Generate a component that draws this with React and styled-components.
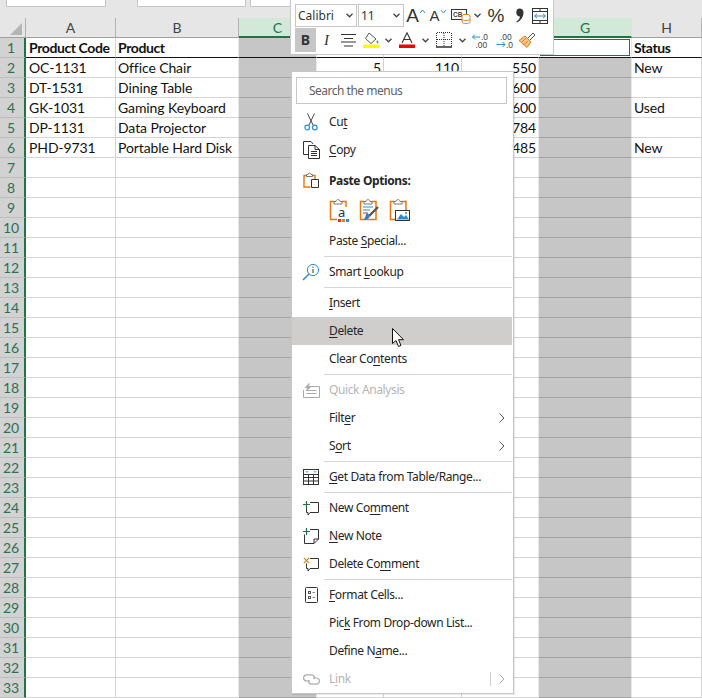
import React from 'react';
import styled, { createGlobalStyle } from 'styled-components';

const Global = createGlobalStyle`
  html, body { margin: 0; padding: 0; background: #fff; }
  body { width: 702px; height: 698px; overflow: hidden; }
`;

const COLS = [
  { k: 'A', w: 90, pad: 3 }, { k: 'B', w: 123, soft: true }, { k: 'C', w: 78, sel: true }, { k: 'D', w: 67 },
  { k: 'E', w: 78 }, { k: 'F', w: 77, soft: true }, { k: 'G', w: 93, sel: true }, { k: 'H', w: 70 },
];

const DATA = {
  1: { A: 'Product Code', B: 'Product', H: 'Status' },
  2: { A: 'OC-1131', B: 'Office Chair', D: '5', E: '110', F: '550', H: 'New' },
  3: { A: 'DT-1531', B: 'Dining Table', F: '600' },
  4: { A: 'GK-1031', B: 'Gaming Keyboard', F: '600', H: 'Used' },
  5: { A: 'DP-1131', B: 'Data Projector', F: '784' },
  6: { A: 'PHD-9731', B: 'Portable Hard Disk', F: '485', H: 'New' },
};
const NUMERIC = ['D', 'E', 'F'];

const Page = styled.div`
  position: relative;
  width: 702px;
  height: 698px;
  overflow: hidden;
  background: #fff;
  font-family: "Lato", "Liberation Sans", sans-serif;
`;
const TopBar = styled.div`
  height: 18px;
  background: #e6e6e6;
  display: flex;
  align-items: flex-start;
  padding-left: 6px;
  gap: 31px;
`;
const TopField = styled.div`
  width: ${p => p.$w}px;
  height: 7px;
  background: #fff;
  border: 1px solid #c6c6c6;
  border-top: 0;
  box-sizing: border-box;
`;
const TopFields = styled.div`
  display: flex;
  gap: 4px;
`;
const HeaderRow = styled.div`
  display: flex;
  height: 20px;
  background: #e6e6e6;
`;
const Corner = styled.div`
  width: 26px;
  height: 20px;
  box-sizing: border-box;
  flex: none;
  border-bottom: 1px solid #a0a0a0;
  border-right: 1px solid #b0b0b0;
  display: flex;
  align-items: flex-end;
  justify-content: flex-end;
  padding: 0 3px 2px 0;
`;
const ColHead = styled.div`
  width: ${p => p.$w}px;
  flex: none;
  box-sizing: border-box;
  height: 20px;
  display: flex;
  align-items: center;
  justify-content: center;
  font-size: 14px;
  color: ${p => (p.$sel ? '#217346' : '#444')};
  background: ${p => (p.$sel ? '#d2e9da' : '#e6e6e6')};
  border-right: 1px solid ${p => (p.$sel ? '#d2e9da' : '#b4b4b4')};
  border-bottom: ${p => (p.$sel ? '2px solid #217346' : '1px solid #a0a0a0')};
`;
const Row = styled.div`
  display: flex;
  height: 20px;
`;
const RowNum = styled.div`
  width: 26px;
  flex: none;
  box-sizing: border-box;
  background: #d2d2d2;
  border-right: 2px solid #217346;
  border-bottom: 1px solid #bdbdbd;
  padding-right: 2px;
  display: flex;
  align-items: center;
  justify-content: center;
  font-size: 14px;
  color: #2f6f52;
`;
const Cell = styled.div`
  width: ${p => p.$w}px;
  flex: none;
  box-sizing: border-box;
  height: 20px;
  padding: 0 2px 0 ${p => p.$pad}px;
  display: flex;
  align-items: center;
  justify-content: ${p => (p.$num ? 'flex-end' : 'flex-start')};
  white-space: nowrap;
  overflow: hidden;
  font-size: 14px;
  font-weight: ${p => (p.$bold ? 700 : 400)};
  letter-spacing: ${p => (p.$bold ? '-0.4px' : '-0.1px')};
  color: #111;
  background: ${p => (p.$active ? '#fff' : p.$sel ? '#c6c6c6' : '#fff')};
  border-right: 1px solid ${p => (p.$sel || p.$soft ? '#e8e8e8' : '#d4d4d4')};
  border-bottom: 1px solid ${p => (p.$head ? '#111' : p.$sel ? '#a4a4a4' : '#d4d4d4')};
  box-shadow: ${p => (p.$active ? 'inset 0 0 0 1px #fff, inset 0 0 0 2px #217346' : 'none')};
`;

/* ---------- mini toolbar ---------- */
const Toolbar = styled.div`
  position: absolute;
  left: 290px;
  top: 0;
  width: 264px;
  height: 55px;
  box-sizing: border-box;
  background: #fff;
  border: 1px solid #c9c9c9;
  border-top: 0;
  padding: 4px 0 0 4px;
  display: flex;
  flex-direction: column;
  gap: 1px;
  font-family: "Noto Sans", sans-serif;
`;
const ToolRow = styled.div`
  display: flex;
  height: ${p => p.$h}px;
  align-items: stretch;
`;
const Combo = styled.div`
  width: ${p => p.$w}px;
  box-sizing: border-box;
  margin-right: 1px;
  border: 1px solid #c6c6c6;
  padding: 0 3px 0 2px;
  display: flex;
  align-items: center;
  justify-content: space-between;
  font-size: 12px;
  color: #333;
`;
const Tool = styled.div`
  width: ${p => p.$w}px;
  flex: none;
  display: flex;
  align-items: center;
  justify-content: center;
  color: #333;
  line-height: 1;
  background: ${p => (p.$on ? '#c6c6c6' : 'transparent')};
  font-size: ${p => p.$fs || 14}px;
  font-weight: ${p => p.$fw || 400};
  font-style: ${p => (p.$it ? 'italic' : 'normal')};
  font-family: ${p => (p.$serif ? '"Liberation Serif", serif' : p.$thin ? '"Liberation Sans", sans-serif' : 'inherit')};
`;

/* ---------- context menu ---------- */
const Menu = styled.div`
  position: absolute;
  left: 291px;
  top: 71px;
  width: 223px;
  height: 623px;
  box-sizing: border-box;
  background: #fff;
  border: 1px solid #c6c6c6;
  padding: 5px 1px 0 0;
  font-family: "Noto Sans", "Liberation Sans", sans-serif;
  font-size: 12px;
  color: #262626;
  box-shadow: 1px 1px 1px rgba(0,0,0,0.08);
`;
const Search = styled.div`
  margin: 0 5px 4px 4px;
  height: 27px;
  box-sizing: border-box;
  border: 1px solid #c6c6c6;
  display: flex;
  align-items: center;
  padding-left: 12px;
  color: #5f5f5f;
  letter-spacing: -0.5px;
`;
const Item = styled.div`
  display: flex;
  align-items: center;
  height: 28px;
  width: 220px;
  background: ${p => (p.$hot ? '#cfcecc' : 'transparent')};
  color: ${p => (p.$off ? '#b5b5b5' : '#262626')};
  font-weight: ${p => (p.$bold ? 700 : 400)};
`;
const Glyph = styled.span`
  width: 37px;
  flex: none;
  display: flex;
  justify-content: center;
  align-items: center;
  padding-left: 1px;
  box-sizing: border-box;
`;
const Label = styled.span`
  flex: 1;
  white-space: nowrap;
  letter-spacing: -0.38px;
  padding-bottom: ${p => (p.$flush ? 0 : 2)}px;
  u { text-underline-offset: 2px; text-decoration-thickness: 1px; }
`;
const Tail = styled.span`
  flex: none;
  display: flex;
  align-items: center;
  width: ${p => p.$w || 13}px;
  margin-right: 7px;
  justify-content: flex-end;
`;
const LinkDivider = styled.span`
  width: 1px;
  height: 14px;
  background: #d0d0d0;
  margin-right: 8px;
`;
const Sep = styled.div`
  height: 1px;
  margin: 1px 0 1px 32px;
  width: 188px;
  background: #d6d6d6;
`;
const PasteRow = styled.div`
  display: flex;
  height: 31px;
  box-sizing: border-box;
  padding: 0 0 3px 37px;
  gap: 9px;
  align-items: center;
`;
const PasteHead = styled(Item)`
  height: 32px;
`;
const Pointer = styled.svg`
  position: absolute;
  left: 392px;
  top: 328px;
`;
const CaretMark = styled.svg`
  align-self: flex-start;
  margin-top: 5px;
`;

/* ---------- icons ---------- */
const Chev = ({ c = '#444' }) => (
  <svg width="7" height="5" viewBox="0 0 7 5"><path d="M.5.8 3.5 3.8 6.5.8" fill="none" stroke={c} strokeWidth="1.3" /></svg>
);
const MenuChev = ({ c = '#555' }) => (
  <svg width="6" height="10" viewBox="0 0 6 10"><path d="M.5.5 5 5 .5 9.5" fill="none" stroke={c} strokeWidth="1" /></svg>
);
const Scissors = () => (
  <svg width="14" height="18" viewBox="0 0 14 18">
    <path d="M3.5 .5 9 12M10.5 .5 5 12" fill="none" stroke="#444" strokeWidth="1" />
    <circle cx="3.2" cy="14.5" r="2.3" fill="none" stroke="#2e8bd0" strokeWidth="1.2" />
    <circle cx="10.8" cy="14.5" r="2.3" fill="none" stroke="#2e8bd0" strokeWidth="1.2" />
  </svg>
);
const CopyI = () => (
  <svg width="17" height="18" viewBox="0 0 17 18" fill="none" stroke="#333">
    <path d="M5 13.5H.5V.5H8L10 3" />
    <path d="M5.5 4.5H12L16.5 8.5V17.5H5.5Z" fill="#fff" />
    <path d="M12 4.5V8.5H16.5M8 10.5H14M8 12.5H14M8 14.5H14" />
  </svg>
);
const PasteHeadI = () => (
  <svg width="16" height="16" viewBox="0 0 16 16" fill="none">
    <path d="M3.5 3.5H1V15H7.5" stroke="#e8760f" strokeWidth="1.4" />
    <path d="M9.5 3.5H12V7" stroke="#e8760f" strokeWidth="1.4" />
    <path d="M3.5 4.5V2.5H5C5 .5 8 .5 8 2.5H9.5V4.5Z" stroke="#777" fill="#fff" />
    <path d="M8.5 7.5H15.5V15.5H8.5Z" stroke="#333" fill="#fff" />
  </svg>
);
const Clip = ({ children }) => (
  <svg width="21" height="24" viewBox="0 0 21 24" fill="none">
    <path d="M5 3.5H1.5V21.5H17V3.5H13" stroke="#e8760f" strokeWidth="1.5" />
    <path d="M5 6V3.5H7C7 1 11 1 11 3.5H13V6Z" stroke="#777" fill="#fff" />
    {children}
  </svg>
);
const PasteA = () => (
  <Clip>
    <rect x="8" y="9" width="11" height="15" fill="#fff" />
    <text x="9" y="19" fontSize="13" fill="#333" fontFamily="Noto Sans">a</text>
    <rect x="9" y="21" width="3" height="3" fill="#e0301e" />
    <rect x="13" y="21" width="3" height="3" fill="#e0801a" />
    <rect x="17" y="21" width="3" height="3" fill="#2e8bd0" />
  </Clip>
);
const PasteBrush = () => (
  <Clip>
    <path d="M4 9H14M4 12H11" stroke="#2e8bd0" />
    <path d="M4 15H9" stroke="#e0301e" />
    <path d="M19 9 10 18" stroke="#555" strokeWidth="2.4" />
    <path d="M4 22C7 22 11 21 11 17L8 15C6 17 7 20 4 22Z" fill="#2e7fc4" />
  </Clip>
);
const PasteImg = () => (
  <Clip>
    <rect x="6.5" y="12.5" width="14" height="10" fill="#fff" stroke="#333" />
    <path d="M8 21.5 12 16 15 19 17 17 20 21.5Z" fill="#2e8bd0" />
    <circle cx="17" cy="15" r="1" fill="#2e8bd0" />
  </Clip>
);
const LookupI = () => (
  <svg width="18" height="18" viewBox="0 0 18 18" fill="none">
    <circle cx="11" cy="7" r="5.6" stroke="#2e8bd0" />
    <path d="M7 11 1 17" stroke="#2e8bd0" strokeWidth="1.5" />
    <path d="M11 6v4" stroke="#333" />
    <path d="M11 3.6v1.2" stroke="#333" />
  </svg>
);
const QuickI = () => (
  <svg width="17" height="15" viewBox="0 0 17 15" fill="none" stroke="#aaa">
    <path d="M5.5 3.5H16.5V14.5H.5V7" />
    <path d="M3.5 10.5H13.5M3.5 7.5H13.5" />
    <path d="M6 .5 2.5 4.5H5L3.5 8 8 3.5H5.5Z" fill="#aaa" />
  </svg>
);
const TableI = () => (
  <svg width="16" height="16" viewBox="0 0 16 16" fill="none" stroke="#333">
    <rect x=".5" y=".5" width="15" height="15" />
    <path d="M.5 5.5H15.5M.5 8.5H15.5M.5 12H15.5M5.5 5.5V15.5M10.5 5.5V15.5" />
    <path d="M3 2.2 4 3.4 5 2.2M11 2.2 12 3.4 13 2.2" stroke="#2e8bd0" />
  </svg>
);
const Bubble = ({ children }) => (
  <svg width="16" height="15" viewBox="0 0 16 15" fill="none">
    <path d="M7 1.5H15.5V11.5H7L5 14V11.5H3.5V6.5" stroke="#333" />
    {children}
  </svg>
);
const NewComment = () => (
  <Bubble><path d="M3.5 0V7M0 3.5H7" stroke="#217346" strokeWidth="1.2" /></Bubble>
);
const DelComment = () => (
  <Bubble><path d="M.8 .8 6.2 6.2M6.2 .8 .8 6.2" stroke="#e0801a" strokeWidth="1.2" /></Bubble>
);
const NoteI = () => (
  <svg width="16" height="16" viewBox="0 0 16 16" fill="none">
    <path d="M7 1.5H15.5V11L11 15.5H1.5V6.5" stroke="#333" />
    <path d="M11 15.5V11H15.5" stroke="#333" />
    <path d="M3.5 0V7M0 3.5H7" stroke="#217346" strokeWidth="1.2" />
  </svg>
);
const FormatI = () => (
  <svg width="13" height="16" viewBox="0 0 13 16" fill="none" stroke="#333">
    <rect x=".5" y=".5" width="12" height="15" rx="1" />
    <rect x="3.5" y="4.5" width="2" height="2" stroke="#555" />
    <rect x="3.5" y="9.5" width="2" height="2" stroke="#555" />
    <path d="M7.5 5.5H10M7.5 10.5H10" stroke="#888" />
  </svg>
);
const LinkI = () => (
  <svg width="17" height="11" viewBox="0 0 17 11" fill="none" stroke="#aaa" strokeWidth="1.2">
    <path d="M7 7H4C-.5 7-.5 .8 4 .8H8C11 .8 12 3 11 5" />
    <path d="M10 4H13C17.5 4 17.5 10.2 13 10.2H9C6 10.2 5 8 6 6" />
  </svg>
);
const Caret = ({ down }) => (
  <CaretMark width="7" height="5" viewBox="0 0 7 5">
    <path d={down ? 'M1 1 3.5 4 6 1' : 'M1 4 3.5 1 6 4'} fill="none" stroke="#3a8cc8" />
  </CaretMark>
);
const StyleI = () => (
  <svg width="20" height="17" viewBox="0 0 20 17" fill="none">
    <rect x=".5" y="2.5" width="15" height="10" stroke="#333" />
    <text x="2" y="10" fontSize="6.5" fontWeight="700" fill="#444" fontFamily="Liberation Sans">CB</text>
    <ellipse cx="15" cy="9" rx="4" ry="1.7" fill="#fff" stroke="#e0801a" />
    <path d="M11 9V15C11 17 19 17 19 15V9M11 12C11 14 19 14 19 12" stroke="#e0801a" fill="#fff" />
  </svg>
);
const CommaI = () => (
  <svg width="8" height="15" viewBox="0 0 8 15"><path d="M3.5 .5C6 .5 7.5 2 7.5 4.5 7.5 9 4.5 13 .8 14.5L.3 13.7C2.5 12.3 3.8 10.5 4 8.6 1.8 8.6.3 7 .3 4.6.3 2 1.5.5 3.5.5Z" fill="#333" /></svg>
);
const WrapI = () => (
  <svg width="16" height="16" viewBox="0 0 16 16" fill="none">
    <rect x=".5" y=".5" width="15" height="15" stroke="#333" />
    <path d="M.5 3.5H15.5M.5 12.5H15.5M8 .5V3.5M8 12.5V15.5" stroke="#333" />
    <path d="M2.5 8H13.5M5 5.8 2.6 8 5 10.2M11 5.8 13.4 8 11 10.2" stroke="#2e8bd0" />
  </svg>
);
const AlignI = () => (
  <svg width="15" height="14" viewBox="0 0 15 14" stroke="#333"><path d="M0 1.5H15M3 5.5H12M0 9H15M3 13H12" /></svg>
);
const FillI = () => (
  <svg width="17" height="16" viewBox="0 0 17 16">
    <path d="M6 1 13 7 8 11.5 2.5 6.5Z" fill="#fff" stroke="#555" />
    <path d="M14 8C15.5 9.8 16 10.5 15 11.3 13.8 11.8 13 10 14 8Z" fill="#2e8bd0" />
    <rect x="0" y="12.5" width="16" height="3.5" fill="#ffff00" />
  </svg>
);
const ColorI = () => (
  <svg width="16" height="16" viewBox="0 0 16 16">
    <path d="M3 11 8 .8 13 11M4.8 7.5H11.2" fill="none" stroke="#333" strokeWidth="1.1" />
    <rect x="0" y="12.5" width="16" height="3.5" fill="#f00000" />
  </svg>
);
const BorderI = () => (
  <svg width="16" height="16" viewBox="0 0 16 16" fill="none">
    <path d="M1 .5H15M.5 1V14M15.5 1V14M8 1V14M1 7.5H15" stroke="#333" strokeDasharray="1 1" />
    <path d="M0 15H16" stroke="#111" strokeWidth="1.3" />
  </svg>
);
const DecI = ({ inc }) => (
  <svg width="18" height="17" viewBox="0 0 18 17" fill="none">
    {inc ? (
      <>
        <path d="M.5 5H8M3 2.5.5 5 3 7.5" stroke="#2e8bd0" />
        <text x="9" y="7.5" fontSize="8.5" fill="#444" fontFamily="Liberation Sans">.0</text>
        <text x="3.5" y="16" fontSize="8.5" fill="#444" fontFamily="Liberation Sans">.00</text>
      </>
    ) : (
      <>
        <text x="4" y="7.5" fontSize="8.5" fill="#444" fontFamily="Liberation Sans">.00</text>
        <path d="M.5 12.5H9M6.5 10 9 12.5 6.5 15" stroke="#2e8bd0" />
        <text x="10" y="16" fontSize="8.5" fill="#444" fontFamily="Liberation Sans">.0</text>
      </>
    )}
  </svg>
);
const BrushI = () => (
  <svg width="18" height="17" viewBox="0 0 18 17" fill="none">
    <path d="M9 7 15 1 17 3 11 9" fill="#fff" stroke="#555" />
    <path d="M7 4 13 10 9 15.5 1 8.5Z" fill="#f5c28a" stroke="#e0801a" />
    <path d="M4 10 8 6M6 12.5 10 9" stroke="#e0801a" />
  </svg>
);

const K = ({ children }) => <u>{children}</u>;

const Sheet = () => {
  const rows = Array.from({ length: 33 }, (_, i) => i + 1);
  return (
    <>
      <TopBar>
        <TopField $w={100} />
        <TopFields>
          <TopField $w={109} />
          <TopField $w={60} />
        </TopFields>
      </TopBar>
      <HeaderRow>
        <Corner>
          <svg width="12" height="12" viewBox="0 0 12 12"><path d="M12 0V12H0Z" fill="#b5b5b5" /></svg>
        </Corner>
        {COLS.map(c => (
          <ColHead key={c.k} $w={c.w} $sel={c.sel}>{c.k}</ColHead>
        ))}
      </HeaderRow>
      {rows.map(r => (
        <Row key={r}>
          <RowNum>{r}</RowNum>
          {COLS.map(c => {
            const val = DATA[r] ? DATA[r][c.k] : '';
            return (
              <Cell
                key={c.k}
                $w={c.w}
                $pad={c.pad || 2}
                $sel={c.sel}
                $soft={c.soft}
                $bold={r === 1}
                $head={r === 1}
                $num={r > 1 && NUMERIC.includes(c.k)}
                $active={r === 1 && c.k === 'G'}
              >
                {val}
              </Cell>
            );
          })}
        </Row>
      ))}
    </>
  );
};

const MiniToolbar = () => (
  <Toolbar>
    <ToolRow $h={23}>
      <Combo $w={62}>Calibri<Chev /></Combo>
      <Combo $w={46}>11<Chev /></Combo>
      <Tool $w={22} $fs={19} $thin>A<Caret /></Tool>
      <Tool $w={22} $fs={15} $thin>A<Caret down /></Tool>
      <Tool $w={23}><StyleI /></Tool>
      <Tool $w={10}><Chev /></Tool>
      <Tool $w={28} $fs={19} $thin>%</Tool>
      <Tool $w={20}><CommaI /></Tool>
      <Tool $w={20}><WrapI /></Tool>
    </ToolRow>
    <ToolRow $h={24}>
      <Tool $w={21} $on $fw={700} $fs={14}>B</Tool>
      <Tool $w={21} $it $serif $fs={15}>I</Tool>
      <Tool $w={23}><AlignI /></Tool>
      <Tool $w={22}><FillI /></Tool>
      <Tool $w={12}><Chev /></Tool>
      <Tool $w={26}><ColorI /></Tool>
      <Tool $w={11}><Chev /></Tool>
      <Tool $w={26}><BorderI /></Tool>
      <Tool $w={11}><Chev /></Tool>
      <Tool $w={26}><DecI inc /></Tool>
      <Tool $w={21}><DecI /></Tool>
      <Tool $w={24}><BrushI /></Tool>
    </ToolRow>
  </Toolbar>
);

const Entry = ({ icon, children, ...rest }) => (
  <Item {...rest}>
    <Glyph>{icon}</Glyph>
    <Label>{children}</Label>
  </Item>
);

const ContextMenu = () => (
  <Menu>
    <Search>Search the menus</Search>
    <Entry icon={<Scissors />}>Cu<K>t</K></Entry>
    <Entry icon={<CopyI />}><K>C</K>opy</Entry>
    <PasteHead $bold><Glyph><PasteHeadI /></Glyph><Label $flush>Paste Options:</Label></PasteHead>
    <PasteRow><PasteA /><PasteBrush /><PasteImg /></PasteRow>
    <Entry>Paste <K>S</K>pecial...</Entry>
    <Sep />
    <Entry icon={<LookupI />}>Smart <K>L</K>ookup</Entry>
    <Sep />
    <Entry><K>I</K>nsert</Entry>
    <Entry $hot><K>D</K>elete</Entry>
    <Entry>Clear Co<K>n</K>tents</Entry>
    <Sep />
    <Entry $off icon={<QuickI />}>Quick Analysis</Entry>
    <Item>
      <Glyph />
      <Label>Filt<K>e</K>r</Label>
      <Tail><MenuChev /></Tail>
    </Item>
    <Item>
      <Glyph />
      <Label>S<K>o</K>rt</Label>
      <Tail><MenuChev /></Tail>
    </Item>
    <Sep />
    <Entry icon={<TableI />}><K>G</K>et Data from Table/Range...</Entry>
    <Sep />
    <Entry icon={<NewComment />}>New Co<K>m</K>ment</Entry>
    <Entry icon={<NoteI />}><K>N</K>ew Note</Entry>
    <Entry icon={<DelComment />}>Delete Co<K>m</K>ment</Entry>
    <Sep />
    <Entry icon={<FormatI />}><K>F</K>ormat Cells...</Entry>
    <Entry>Pic<K>k</K> From Drop-down List...</Entry>
    <Entry>Define N<K>a</K>me...</Entry>
    <Item $off>
      <Glyph><LinkI /></Glyph>
      <Label>L<K>i</K>nk</Label>
      <LinkDivider />
      <Tail $w={6}><MenuChev c="#aaa" /></Tail>
    </Item>
  </Menu>
);

export default function App() {
  return (
    <Page>
      <Global />
      <Sheet />
      <MiniToolbar />
      <ContextMenu />
      <Pointer width="13" height="20" viewBox="0 0 13 20">
        <path d="M.5.5V15.5L4 12.5 6.5 18.5 9 17.5 6.5 11.7H11.5Z" fill="#fff" stroke="#111" strokeWidth="1" />
      </Pointer>
    </Page>
  );
}
